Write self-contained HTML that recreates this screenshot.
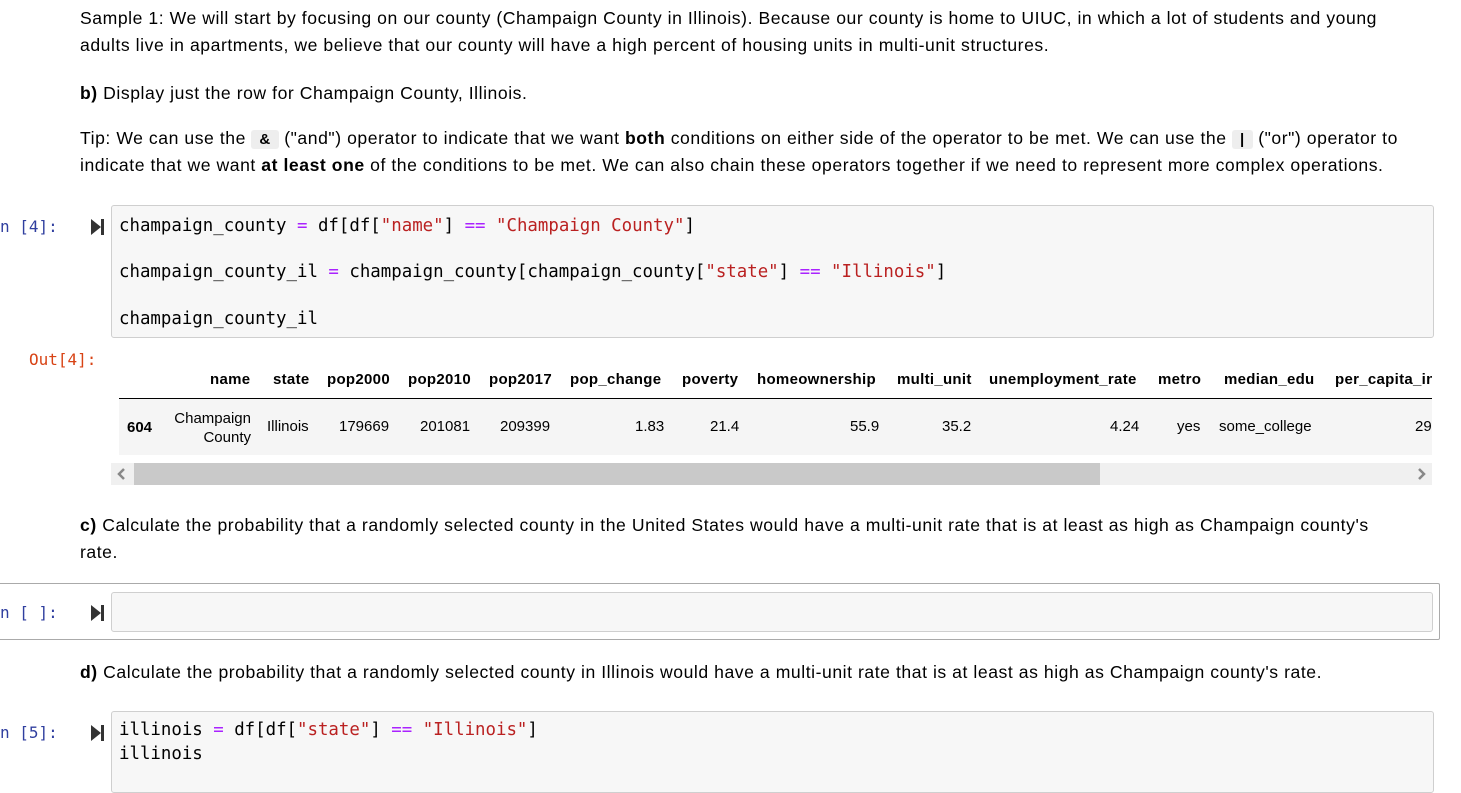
<!DOCTYPE html>
<html><head><meta charset="utf-8"><style>
body{margin:0;width:1461px;height:773px;overflow:hidden;background:#fff;font-family:"Liberation Sans",Arial,sans-serif;color:#000;position:relative}
.a{position:absolute;white-space:nowrap}
.t{font-size:17.6px;line-height:27px;letter-spacing:0.55px}
.code{font-family:"DejaVu Sans Mono",monospace;font-size:17.4px;color:#000}
.p{color:#aa22ff}.s{color:#ba2121}
.pr{font-family:"DejaVu Sans Mono",monospace;font-size:16px;color:#303f9f}
.box{position:absolute;background:#f7f7f7;border:1px solid #cfcfcf;border-radius:3px}
.kc{background:#eee;border-radius:3px;padding:1px 8px;font-weight:bold;font-size:15px}
.th{font-weight:bold;font-size:15px;top:371px;letter-spacing:0.3px}
.td{font-size:15px;top:418px}
.run{position:absolute;width:0;height:0;border-top:8px solid transparent;border-bottom:8px solid transparent;border-left:10px solid #333}
</style></head><body>
<div class="a t" style="left:80px;top:5px">Sample 1: We will start by focusing on our county (Champaign County in Illinois). Because our county is home to UIUC, in which a lot of students and young</div>
<div class="a t" style="left:80px;top:32px">adults live in apartments, we believe that our county will have a high percent of housing units in multi-unit structures.</div>
<div class="a t" style="left:80px;top:80px"><b>b)</b> Display just the row for Champaign County, Illinois.</div>
<div class="a t" style="left:80px;top:125px">Tip: We can use the <span class="kc">&amp;</span> ("and") operator to indicate that we want <b>both</b> conditions on either side of the operator to be met. We can use the <span class="kc">|</span> ("or") operator to</div>
<div class="a t" style="left:80px;top:152px">indicate that we want <b>at least one</b> of the conditions to be met. We can also chain these operators together if we need to represent more complex operations.</div>

<div class="a pr" style="left:0;top:217px">n [4]:</div>
<div class="run" style="left:91px;top:219px"></div><div class="a" style="left:101px;top:219px;width:3px;height:16px;background:#333"></div>
<div class="box" style="left:111px;top:205px;width:1321px;height:131px"></div>
<div class="a code" style="left:119px;top:216px">champaign_county <span class="p">=</span> df[df[<span class="s">"name"</span>] <span class="p">==</span> <span class="s">"Champaign County"</span>]</div>
<div class="a code" style="left:119px;top:262px">champaign_county_il <span class="p">=</span> champaign_county[champaign_county[<span class="s">"state"</span>] <span class="p">==</span> <span class="s">"Illinois"</span>]</div>
<div class="a code" style="left:119px;top:309px">champaign_county_il</div>
<div class="a pr" style="left:29px;top:350px;color:#d84315">Out[4]:</div>

<div class="a" style="left:0;top:0;width:1432px;height:460px;overflow:hidden">
<div class="a th" style="left:210px">name</div><div class="a th" style="left:273px">state</div><div class="a th" style="left:327px">pop2000</div><div class="a th" style="left:408px">pop2010</div><div class="a th" style="left:489px">pop2017</div><div class="a th" style="left:570px">pop_change</div><div class="a th" style="left:682px">poverty</div><div class="a th" style="left:757px">homeownership</div><div class="a th" style="left:897px">multi_unit</div><div class="a th" style="left:989px">unemployment_rate</div><div class="a th" style="left:1158px">metro</div><div class="a th" style="left:1224px">median_edu</div><div class="a th" style="left:1335px">per_capita_income</div>
<div class="a" style="left:119px;top:398px;width:1313px;height:1px;background:#000"></div>
<div class="a" style="left:119px;top:399px;width:1313px;height:56px;background:#f5f5f5"></div>
<div class="a" style="left:127px;top:419px;font-weight:bold;font-size:15px">604</div>
<div class="a" style="left:170px;top:409px;font-size:15px;text-align:right;line-height:19px;width:81px">Champaign<br>County</div>
<div class="a td" style="left:267px">Illinois</div><div class="a td" style="left:339px">179669</div><div class="a td" style="left:420px">201081</div><div class="a td" style="left:500px">209399</div><div class="a td" style="left:635px">1.83</div><div class="a td" style="left:710px">21.4</div><div class="a td" style="left:850px">55.9</div><div class="a td" style="left:942px">35.2</div><div class="a td" style="left:1110px">4.24</div><div class="a td" style="left:1177px">yes</div><div class="a td" style="left:1219px">some_college</div><div class="a td" style="left:1415px">29</div>
</div>
<div class="a" style="left:111px;top:463px;width:1321px;height:22px;background:#f0f0f0"></div>
<div class="a" style="left:134px;top:463px;width:966px;height:22px;background:#c9c9c9"></div>
<svg class="a" style="left:116px;top:467px" width="12" height="14"><path d="M8 2 L3 7 L8 12" stroke="#888" stroke-width="2.5" fill="none"/></svg>
<svg class="a" style="left:1415px;top:467px" width="12" height="14"><path d="M4 2 L9 7 L4 12" stroke="#888" stroke-width="2.5" fill="none"/></svg>

<div class="a t" style="left:80px;top:512px"><b>c)</b> Calculate the probability that a randomly selected county in the United States would have a multi-unit rate that is at least as high as Champaign county's</div>
<div class="a t" style="left:80px;top:539px">rate.</div>

<div class="a" style="left:-2px;top:583px;width:1440px;height:55px;border:1px solid #aaa;border-radius:2px"></div>
<div class="a pr" style="left:0;top:603px">n [ ]:</div>
<div class="run" style="left:91px;top:605px"></div><div class="a" style="left:101px;top:605px;width:3px;height:16px;background:#333"></div>
<div class="box" style="left:111px;top:592px;width:1320px;height:38px"></div>

<div class="a t" style="left:80px;top:659px"><b>d)</b> Calculate the probability that a randomly selected county in Illinois would have a multi-unit rate that is at least as high as Champaign county's rate.</div>

<div class="a pr" style="left:0;top:723px">n [5]:</div>
<div class="run" style="left:91px;top:725px"></div><div class="a" style="left:101px;top:725px;width:3px;height:16px;background:#333"></div>
<div class="box" style="left:111px;top:711px;width:1321px;height:80px"></div>
<div class="a code" style="left:119px;top:720px">illinois <span class="p">=</span> df[df[<span class="s">"state"</span>] <span class="p">==</span> <span class="s">"Illinois"</span>]</div>
<div class="a code" style="left:119px;top:744px">illinois</div>
</body></html>
